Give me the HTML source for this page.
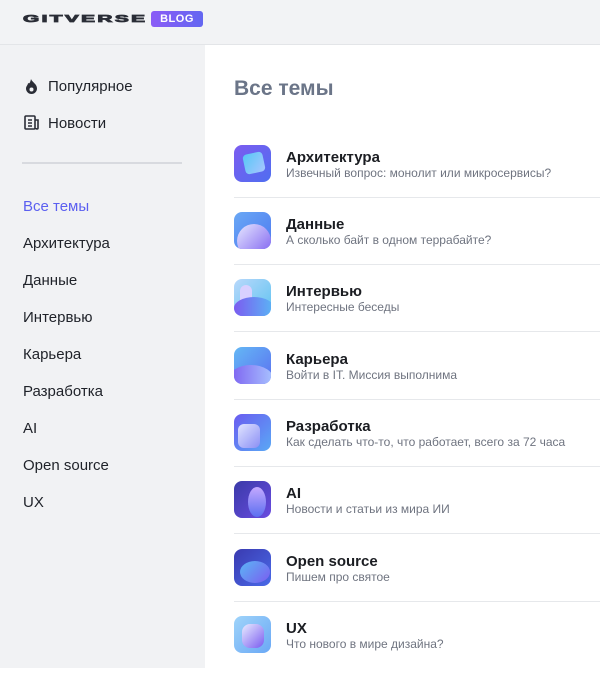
<!DOCTYPE html><html><head><meta charset="utf-8"><style>
*{margin:0;padding:0;box-sizing:border-box}
body{width:600px;height:668px;overflow:hidden;font-family:"Liberation Sans",sans-serif;background:#fff;position:relative}
.hdr{position:absolute;left:0;top:0;width:600px;height:45px;background:#f2f3f5;border-bottom:1px solid #e3e5e8}
.logo{position:absolute;left:23px;top:13px;font-weight:bold;font-size:13px;letter-spacing:1.5px;color:#2a2d36;font-family:"Liberation Sans",sans-serif;transform:scale(1.6,.8);transform-origin:left top;line-height:13px;-webkit-text-stroke:1px #2a2d36}
.blog{position:absolute;left:151px;top:11px;width:52px;height:16px;border-radius:3px;background:linear-gradient(90deg,#8b5cf6,#6366f1);color:#fff;font-size:11px;font-weight:bold;text-align:center;line-height:16px;letter-spacing:.5px;font-family:"Liberation Sans",sans-serif}
.side{position:absolute;left:0;top:45px;width:205px;height:623px;background:#f1f2f4}
.s{position:absolute;left:23px;font-size:15px;color:#1f2229}
.dv{position:absolute;left:22px;top:162px;width:160px;height:2px;background:#d8dadf}
h1{position:absolute;left:234px;top:77px;font-size:21px;color:#6b7588;font-weight:bold}
.it{position:absolute;left:234px;width:366px;height:67px}
.ic{position:absolute;left:0;top:0;width:37px;height:37px;border-radius:8px;overflow:hidden}
.t{position:absolute;left:52px;top:0;font-size:15px;font-weight:bold;color:#1b1d22}
.d{position:absolute;left:52px;top:21px;font-size:12px;color:#6f7480;white-space:nowrap}
.ln{position:absolute;left:234px;width:366px;height:1px;background:#e6e8eb}
</style></head><body>
<div class="hdr"><div class="logo">GITVERSE</div><div class="blog">BLOG</div></div>
<div class="side"></div>
<svg style="position:absolute;left:24px;top:78px" width="15" height="16" viewBox="0 0 15 16"><path d="M7 1C8 4 13 6 13 10.5A5.5 5.5 0 0 1 2 10.5C2 8 4 7 4 5C5.5 6 6 5 7 1Z" fill="#2a2d36"/><circle cx="7.5" cy="11.5" r="2" fill="#f1f2f4"/></svg>
<svg style="position:absolute;left:24px;top:115px" width="15" height="15" viewBox="0 0 15 15"><rect x="1" y="1" width="10" height="13" rx="1" fill="none" stroke="#2a2d36" stroke-width="1.6"/><path d="M11 5h3v8a1 1 0 0 1-2 0" fill="none" stroke="#2a2d36" stroke-width="1.6"/><path d="M4 5h4M4 8h4M4 11h4" stroke="#2a2d36" stroke-width="1.4"/></svg>
<div class="s" style="left:48px;top:78px">Популярное</div>
<div class="s" style="left:48px;top:115px">Новости</div>
<div class="dv"></div>
<div class="s" style="top:198px;color:#5b5ff0">Все темы</div>
<div class="s" style="top:235px">Архитектура</div>
<div class="s" style="top:272px">Данные</div>
<div class="s" style="top:309px">Интервью</div>
<div class="s" style="top:346px">Карьера</div>
<div class="s" style="top:383px">Разработка</div>
<div class="s" style="top:420px">AI</div>
<div class="s" style="top:457px">Open source</div>
<div class="s" style="top:494px">UX</div>
<h1>Все темы</h1>

<div class="it" style="top:145px"><div class="ic" style="background:linear-gradient(135deg,#7c5cf0,#4f6ef0)"><div style="position:absolute;left:10px;top:8px;width:20px;height:20px;border-radius:4px;background:linear-gradient(135deg,#55c8f5,#a9c6ff);transform:rotate(-12deg)"></div></div><div class="t" style="top:4px">Архитектура</div><div class="d">Извечный вопрос: монолит или микросервисы?</div></div>
<div class="ln" style="top:197px"></div>
<div class="it" style="top:212px"><div class="ic" style="background:linear-gradient(135deg,#6aa8f5,#4e7af0)"><div style="position:absolute;left:3px;top:12px;width:34px;height:34px;border-radius:50%;background:linear-gradient(135deg,#e6e8ff,#7b5cf0)"></div></div><div class="t" style="top:4px">Данные</div><div class="d">А сколько байт в одном террабайте?</div></div>
<div class="ln" style="top:264px"></div>
<div class="it" style="top:279px"><div class="ic" style="background:linear-gradient(135deg,#b8d8fb,#5ec3f0)"><div style="position:absolute;left:6px;top:6px;width:12px;height:22px;border-radius:6px 6px 0 0;background:#d8d0ff"></div><div style="position:absolute;left:0;top:18px;width:40px;height:22px;border-radius:50% 50% 0 0;background:linear-gradient(90deg,#7b5cf0,#5ab6f5)"></div></div><div class="t" style="top:4px">Интервью</div><div class="d">Интересные беседы</div></div>
<div class="ln" style="top:331px"></div>
<div class="it" style="top:347px"><div class="ic" style="background:linear-gradient(135deg,#64b8f5,#5b6ff0)"><div style="position:absolute;left:-6px;top:18px;width:46px;height:30px;border-radius:50%;background:linear-gradient(90deg,#7b5cf0,#a8c4ff)"></div></div><div class="t" style="top:4px">Карьера</div><div class="d">Войти в IT. Миссия выполнима</div></div>
<div class="ln" style="top:399px"></div>
<div class="it" style="top:414px"><div class="ic" style="background:linear-gradient(135deg,#6a5cf0,#5aa8f5)"><div style="position:absolute;left:4px;top:10px;width:22px;height:24px;border-radius:6px;background:linear-gradient(135deg,#e0e4ff,#8b8ff5)"></div></div><div class="t" style="top:4px">Разработка</div><div class="d">Как сделать что-то, что работает, всего за 72 часа</div></div>
<div class="ln" style="top:466px"></div>
<div class="it" style="top:481px"><div class="ic" style="background:linear-gradient(135deg,#3a3aa8,#6a4ce0)"><div style="position:absolute;left:14px;top:6px;width:18px;height:30px;border-radius:50%;background:linear-gradient(180deg,#c4a8ff,#5b6ff0)"></div></div><div class="t" style="top:4px">AI</div><div class="d">Новости и статьи из мира ИИ</div></div>
<div class="ln" style="top:533px"></div>
<div class="it" style="top:549px"><div class="ic" style="background:linear-gradient(135deg,#3a3ab0,#4a6ae8)"><div style="position:absolute;left:6px;top:12px;width:30px;height:22px;border-radius:50%;background:linear-gradient(135deg,#5ab6f5,#7b5cf0)"></div></div><div class="t" style="top:4px">Open source</div><div class="d">Пишем про святое</div></div>
<div class="ln" style="top:601px"></div>
<div class="it" style="top:616px"><div class="ic" style="background:linear-gradient(135deg,#9fd4fa,#6aa8f5)"><div style="position:absolute;left:8px;top:8px;width:22px;height:24px;border-radius:8px;background:linear-gradient(135deg,#e8ecff,#7b5cf0)"></div></div><div class="t" style="top:4px">UX</div><div class="d">Что нового в мире дизайна?</div></div>
</body></html>
